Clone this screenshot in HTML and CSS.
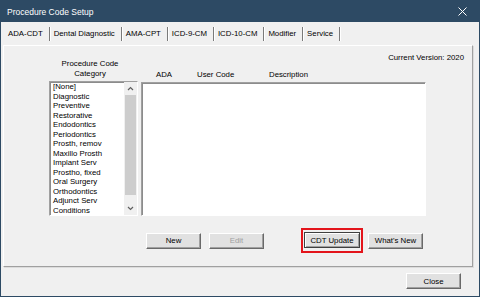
FILE: index.html
```html
<!DOCTYPE html>
<html>
<head>
<meta charset="utf-8">
<link rel="stylesheet" href="styles.css">
</head>
<body>
<div class="window">
  <div class="titlebar">
    <span class="title">Procedure Code Setup</span>
    <svg class="close" width="9" height="9" viewBox="0 0 9 9"><path d="M0.5 0.5 L8.5 8.5 M8.5 0.5 L0.5 8.5" stroke="#fff" stroke-width="1" fill="none"/></svg>
  </div>
  <div class="tabs">
    <span class="tab sel">ADA-CDT</span>
    <span class="tab">Dental Diagnostic</span>
    <span class="tab">AMA-CPT</span>
    <span class="tab">ICD-9-CM</span>
    <span class="tab">ICD-10-CM</span>
    <span class="tab">Modifier</span>
    <span class="tab">Service</span>
  </div>
  <div class="panel">
    <div class="grid">
      <div class="cat-head">Procedure Code<br>Category</div>
      <div class="version">Current Version: 2020</div>
      <div class="col-heads"><span class="h-ada">ADA</span><span class="h-user">User Code</span><span>Description</span></div>
      <div class="listbox">
        <ul class="items">
          <li>[None]</li>
          <li>Diagnostic</li>
          <li>Preventive</li>
          <li>Restorative</li>
          <li>Endodontics</li>
          <li>Periodontics</li>
          <li>Prosth, remov</li>
          <li>Maxillo Prosth</li>
          <li>Implant Serv</li>
          <li>Prostho, fixed</li>
          <li>Oral Surgery</li>
          <li>Orthodontics</li>
          <li>Adjunct Serv</li>
          <li>Conditions</li>
        </ul>
        <div class="scrollbar">
          <div class="arrow"><svg width="7" height="5" viewBox="0 0 7 5"><path d="M1 4 L3.5 1.5 L6 4" stroke="#606060" stroke-width="1.2" fill="none"/></svg></div>
          <div class="track"><div class="thumb"></div></div>
          <div class="arrow"><svg width="7" height="5" viewBox="0 0 7 5"><path d="M1 1 L3.5 3.5 L6 1" stroke="#606060" stroke-width="1.2" fill="none"/></svg></div>
        </div>
      </div>
      <div class="listview"></div>
      <div class="buttons">
        <button class="btn">New</button>
        <button class="btn disabled b-edit">Edit</button>
        <span class="highlight"><button class="btn default">CDT Update</button></span>
        <button class="btn b-whats">What's New</button>
      </div>
    </div>
  </div>
  <div class="footer">
    <button class="btn">Close</button>
  </div>
</div>
</body>
</html>
```

FILE: styles.css
```css
html, body {
  margin: 0;
  padding: 0;
  background: #f0f0f0;
}
.window {
  width: 480px;
  height: 297px;
  box-sizing: border-box;
  border: 1px solid #2d4a64;
  background: #f0f0f0;
  display: flex;
  flex-direction: column;
  font-family: "Liberation Sans", Arial, sans-serif;
  font-size: 7.8px;
  color: #000;
  overflow: hidden;
}
.titlebar {
  height: 21px;
  flex: none;
  background: #2d4a64;
  color: #fff;
  display: flex;
  align-items: center;
  justify-content: space-between;
  padding: 0 12px 0 6px;
}
.title {
  font-size: 8.5px;
}
.close {
  display: block;
}
.tabs {
  height: 23px;
  flex: none;
  display: flex;
  align-items: center;
  padding-left: 3px;
}
.tab {
  padding: 0 6px 0 4px;
  line-height: 14px;
  border-right: 1px solid #7a7a7a;
  box-shadow: 1px 0 0 #fff;
  white-space: nowrap;
}
.panel {
  height: 222px;
  flex: none;
  box-sizing: border-box;
  margin: 0 6px 0 2px;
  border-style: solid;
  border-width: 1px;
  border-color: #fff #a0a0a0 #a0a0a0 #fff;
  box-shadow: 1px 1px 0 #dcdcdc;
  padding: 7px 8px 0 45px;
}
.grid {
  display: grid;
  grid-template-columns: 89px 285px 1fr;
  column-gap: 3px;
  grid-template-rows: 10px 17px 136px auto;
}
.cat-head {
  grid-column: 1;
  grid-row: 1 / 3;
  align-self: end;
  text-align: center;
  line-height: 9.5px;
  margin-bottom: 2px;
  padding-right: 7px;
}
.version {
  grid-column: 2 / 4;
  grid-row: 1;
  text-align: right;
  line-height: 10px;
}
.col-heads {
  grid-column: 2;
  grid-row: 2;
  align-self: end;
  line-height: 10px;
  display: flex;
  padding-left: 15px;
}
.h-ada { width: 41px; }
.h-user { width: 72px; }
.listbox {
  grid-column: 1;
  grid-row: 3;
  margin-top: 1px;
  height: 135px;
  box-sizing: border-box;
  border-style: solid;
  border-width: 1px;
  border-color: #a0a0a0 #fff #fff #a0a0a0;
  box-shadow: inset 1px 1px 0 #8c8c8c;
  background: #fff;
  display: flex;
}
.items {
  list-style: none;
  margin: 0;
  padding: 0 0 0 3px;
  flex: 1;
  overflow: hidden;
}
.items li {
  line-height: 9.5px;
  white-space: nowrap;
}
.scrollbar {
  width: 13px;
  flex: none;
  background: #f0f0f0;
  display: flex;
  flex-direction: column;
}
.arrow {
  height: 13px;
  display: flex;
  align-items: center;
  justify-content: center;
}
.arrow svg { display: block; }
.track {
  flex: 1;
  padding: 0 1px 7px 1px;
  display: flex;
}
.thumb {
  flex: 1;
  background: #cdcdcd;
}
.listview {
  grid-column: 2;
  grid-row: 3;
  margin-top: 2px;
  height: 134px;
  box-sizing: border-box;
  border-style: solid;
  border-width: 1px;
  border-color: #a0a0a0 #fff #fff #a0a0a0;
  box-shadow: inset 1px 1px 0 #8c8c8c;
  background: #fff;
}
.buttons {
  grid-column: 2 / 4;
  grid-row: 4;
  margin-top: 12px;
  padding-left: 5px;
  display: flex;
  align-items: center;
}
.btn {
  width: 55px;
  height: 16px;
  box-sizing: border-box;
  margin: 0;
  padding: 0;
  font-family: "Liberation Sans", Arial, sans-serif;
  font-size: 7.8px;
  color: #000;
  background: #e1e1e1;
  border-style: solid;
  border-width: 1px;
  border-color: #fff #696969 #696969 #fff;
  box-shadow: inset -1px -1px 0 #a0a0a0;
}
.btn.disabled {
  color: #a0a0a0;
}
.b-edit { margin-left: 8px; }
.highlight {
  margin-left: 37px;
  border: 2px solid #e3141b;
  padding: 2px 1px 3px 1px;
  display: flex;
}
.btn.default {
  width: 56px;
  border-color: #404040;
  box-shadow: inset 1px 1px 0 #fff, inset -1px -1px 0 #a0a0a0;
}
.b-whats { margin-left: 5px; }
.footer {
  flex: 1;
  display: flex;
  justify-content: flex-end;
  align-items: flex-start;
  padding: 6px 18px 0 0;
}
```
